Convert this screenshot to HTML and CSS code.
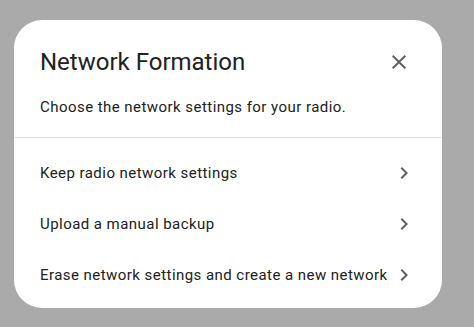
FILE: index.html
```html
<!DOCTYPE html>
<html lang="en">
<head>
    <meta charset="UTF-8">
    <meta name="viewport" content="width=device-width, initial-scale=1.0">
    <title>Network Formation</title>
    <link rel="stylesheet" href="styles.css">
</head>
<body>

    <!-- Dialogo -->
    <div class="dialog">
        <div class="dialog-header">
            <h2>Network Formation</h2>
            <button class="close" type="button" aria-label="Close">
                <svg width="24" height="24" viewBox="0 0 24 24"><path d="M19 6.41 17.59 5 12 10.59 6.41 5 5 6.41 10.59 12 5 17.59 6.41 19 12 13.41 17.59 19 19 17.59 13.41 12z" fill="currentColor"/></svg>
            </button>
        </div>
        <p class="intro">Choose the network settings for your radio.</p>

        <ul class="options">
            <li>
                <span>Keep radio network settings</span>
                <svg width="24" height="24" viewBox="0 0 24 24"><path d="M8.59 16.59 13.17 12 8.59 7.41 10 6l6 6-6 6z" fill="currentColor"/></svg>
            </li>
            <li>
                <span>Upload a manual backup</span>
                <svg width="24" height="24" viewBox="0 0 24 24"><path d="M8.59 16.59 13.17 12 8.59 7.41 10 6l6 6-6 6z" fill="currentColor"/></svg>
            </li>
            <li>
                <span>Erase network settings and create a new network</span>
                <svg width="24" height="24" viewBox="0 0 24 24"><path d="M8.59 16.59 13.17 12 8.59 7.41 10 6l6 6-6 6z" fill="currentColor"/></svg>
            </li>
        </ul>
    </div>

</body>
</html>
```

FILE: styles.css
```css
body {
    font-family: Roboto, 'Noto Sans', sans-serif;
    margin: 0;
    height: 327px;
    background: #aaaaaa;
    padding: 20px 32px 19px 14px;
    box-sizing: border-box;
}

.dialog {
    background: white;
    border-radius: 28px;
    height: 288px;
    box-sizing: border-box;
    color: #212121;
}

.dialog-header {
    display: flex;
    align-items: center;
    justify-content: space-between;
    padding: 26px 31px 0 26px;
}

.dialog-header h2 {
    margin: 0;
    font-size: 24px;
    font-weight: 400;
    line-height: 32px;
}

.close {
    background: none;
    border: none;
    padding: 0;
    width: 24px;
    height: 24px;
    color: #616161;
    cursor: pointer;
}

.intro {
    margin: 0;
    padding: 19px 26px 20px;
    font-size: 15px;
    letter-spacing: 0.45px;
    line-height: 20px;
    border-bottom: 1px solid #e3e3e3;
}

.options {
    list-style: none;
    margin: 0;
    padding: 9px 0 0;
}

.options li {
    display: flex;
    align-items: center;
    justify-content: space-between;
    height: 51px;
    padding: 0 26px 0 26px;
    font-size: 15px;
    letter-spacing: 0.45px;
}

.options svg {
    color: #616161;
    width: 24px;
    height: 24px;
}
```
